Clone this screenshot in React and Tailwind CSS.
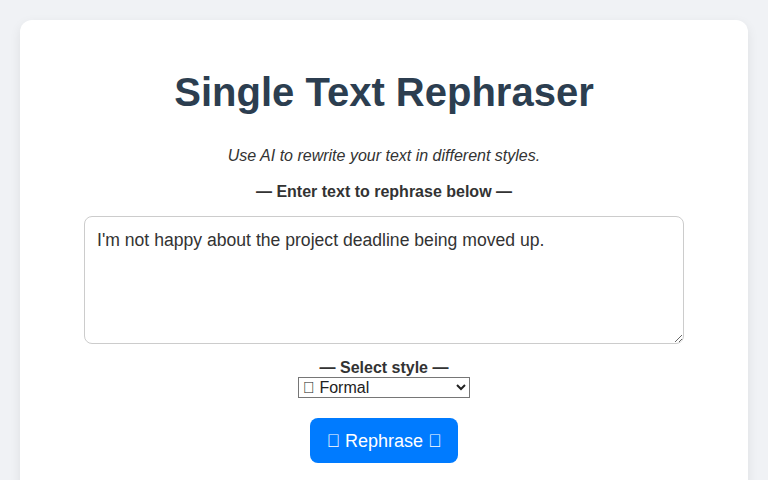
export default function App() {
  return (
    <div className="min-h-screen bg-[#f0f2f5] p-5 font-['Liberation_Sans',Arial,sans-serif]">
      <div className="bg-white rounded-xl shadow-[0_4px_12px_rgba(0,0,0,0.08)] px-10 pt-[49px] pb-10 flex flex-col items-center text-[#333]">
        <h1 className="text-[40px] leading-[46px] font-bold text-[#2c3e50]">Single Text Rephraser</h1>
        <p className="mt-[29px] italic text-base">Use AI to rewrite your text in different styles.</p>
        <p className="mt-3 font-bold text-base">— Enter text to rephrase below —</p>
        <textarea
          className="mt-3 w-[600px] h-[128px] border border-[#ccc] rounded-lg p-3 text-[17.6px] leading-[22px] text-[#333]"
          defaultValue="I'm not happy about the project deadline being moved up."
        />
        <label className="mt-[12px] font-bold text-base">— Select style —</label>
        <select className="-mt-[3px] w-[172px] h-[21px] border border-[#767676] text-base text-[#222] bg-white">
          <option>{"\uE000"} Formal</option>
          <option>{"\uE001"} Casual</option>
          <option>{"\uE002"} Friendly</option>
        </select>
        <button className="mt-5 w-[148px] h-[45px] bg-[#007bff] text-white text-lg rounded-lg">
          {"\uE003"} Rephrase {"\uE004"}
        </button>
      </div>
    </div>
  );
}
